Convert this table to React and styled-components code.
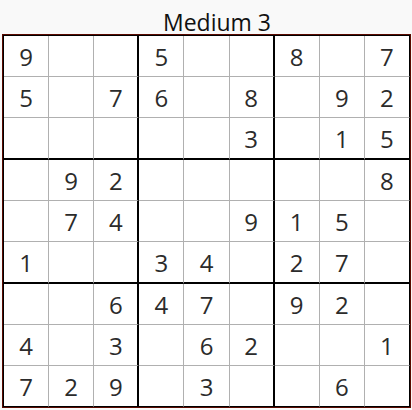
import React from 'react'
import styled, { createGlobalStyle } from 'styled-components'

const GlobalStyle = createGlobalStyle`
  body {
    margin: 0;
    background: #f9f9f9;
    font-family: 'Open Sans', 'Noto Sans', sans-serif;
  }
`

const Page = styled.div`
  width: 412px;
  height: 410px;
`

const Title = styled.div`
  box-sizing: border-box;
  height: 34px;
  padding: 11px 0 0 22px;
  font-size: 23px;
  line-height: 23px;
  text-align: center;
  color: #111;
`

const Board = styled.div`
  box-sizing: border-box;
  width: 409px;
  margin-left: 2px;
  border: 1px solid #5a0a00;
`

const Grid = styled.div`
  display: grid;
  grid-template-columns: repeat(9, 1fr);
  border-left: 1px solid #000;
  border-top: 1px solid #000;
  background: #fff;
`

const Cell = styled.div`
  box-sizing: border-box;
  height: ${p => 40 + p.$bottom}px;
  display: flex;
  align-items: center;
  justify-content: center;
  font-size: 24px;
  color: #2b2b2b;
  border-right: ${p => p.$right}px solid ${p => (p.$thickRight ? '#000' : '#b0b0b0')};
  border-bottom: ${p => p.$bottom}px solid ${p => (p.$thickBottom ? '#000' : '#b0b0b0')};
`

const puzzle = [
  '9  5  8 7',
  '5 76 8 92',
  '     3 15',
  ' 92     8',
  ' 74  915 ',
  '1  34 27 ',
  '  647 92 ',
  '4 3 62  1',
  '729 3  6 ',
]

const lineWidth = i => (i === 2 || i === 5 ? 2 : 1)

const App = () => (
  <Page>
    <GlobalStyle />
    <Title>Medium 3</Title>
    <Board>
      <Grid>
        {puzzle.map((row, r) =>
          row.split('').map((ch, c) => (
            <Cell
              key={`${r}-${c}`}
              $right={lineWidth(c)}
              $bottom={lineWidth(r)}
              $thickRight={c === 2 || c === 5 || c === 8}
              $thickBottom={r === 2 || r === 5 || r === 8}
            >
              {ch.trim()}
            </Cell>
          ))
        )}
      </Grid>
    </Board>
  </Page>
)

export default App
